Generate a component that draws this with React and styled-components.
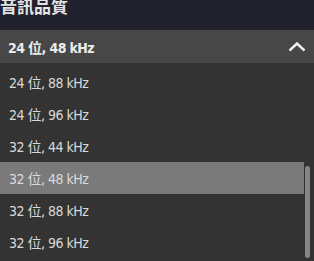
import styled, { createGlobalStyle } from "styled-components"

const Global = createGlobalStyle`
    html, body {
        margin: 0;
        padding: 0;
        background-color: #22212e;
    }
    body {
        font-family: "DejaVu Sans Condensed", "Noto Sans CJK TC", sans-serif;
        overflow: hidden;
    }
`

const Page = styled.div`
    width: 314px;
    height: 261px;
    display: flex;
    flex-direction: column;
    overflow: hidden;
`
const Heading = styled.h3`
    margin: -6px 0 0 0;
    height: 36px;
    line-height: 24px;
    font-size: 17px;
    font-weight: bold;
    color: #e4e4e4;
    font-family: "Noto Sans CJK TC", sans-serif;
`
const SelectBar = styled.div`
    align-items: center;
    background-color: #474747;
    color: #ececec;
    display: flex;
    height: 33px;
    justify-content: space-between;
    padding: 0 8px 0 8px;
    font-size: 14px;
    font-weight: bold;
    letter-spacing: -0.6px;
`
const Dropdown = styled.div`
    background-color: #333333;
    display: flex;
    flex: 1;
    padding-top: 3px;
`
const Options = styled.ul`
    list-style: none;
    margin: 0;
    padding: 0;
    width: 304px;
`
const Option = styled.li`
    align-items: center;
    background-color: ${props => props.active ? "#7a7a7a" : "transparent"};
    color: #dadada;
    display: flex;
    font-size: 14px;
    letter-spacing: -0.5px;
    height: 32px;
    padding-left: 9px;
`
const Track = styled.div`
    padding: 100px 0 0 1px;
    width: 6px;
`
const Thumb = styled.div`
    background-color: #858585;
    border-radius: 3px;
    height: 92px;
    width: 5px;
`

const options = [
    "24 位, 88 kHz",
    "24 位, 96 kHz",
    "32 位, 44 kHz",
    "32 位, 48 kHz",
    "32 位, 88 kHz",
    "32 位, 96 kHz",
]

function Chevron () {
    return (
        <svg width="18" height="10" viewBox="0 0 18 10">
            <path d="M1.5 8.5 L9 1.5 L16.5 8.5" fill="none" stroke="#f2f2f2" strokeWidth="2.4" />
        </svg>
    )
}

export default function App () {
    return (
        <Page>
            <Global />
            <Heading>音訊品質</Heading>
            <SelectBar>
                <span>24 位, 48 kHz</span>
                <Chevron />
            </SelectBar>
            <Dropdown>
                <Options>
                    {options.map(o => (
                        <Option key={o} active={o === "32 位, 48 kHz"}>{o}</Option>
                    ))}
                </Options>
                <Track>
                    <Thumb />
                </Track>
            </Dropdown>
        </Page>
    )
}
